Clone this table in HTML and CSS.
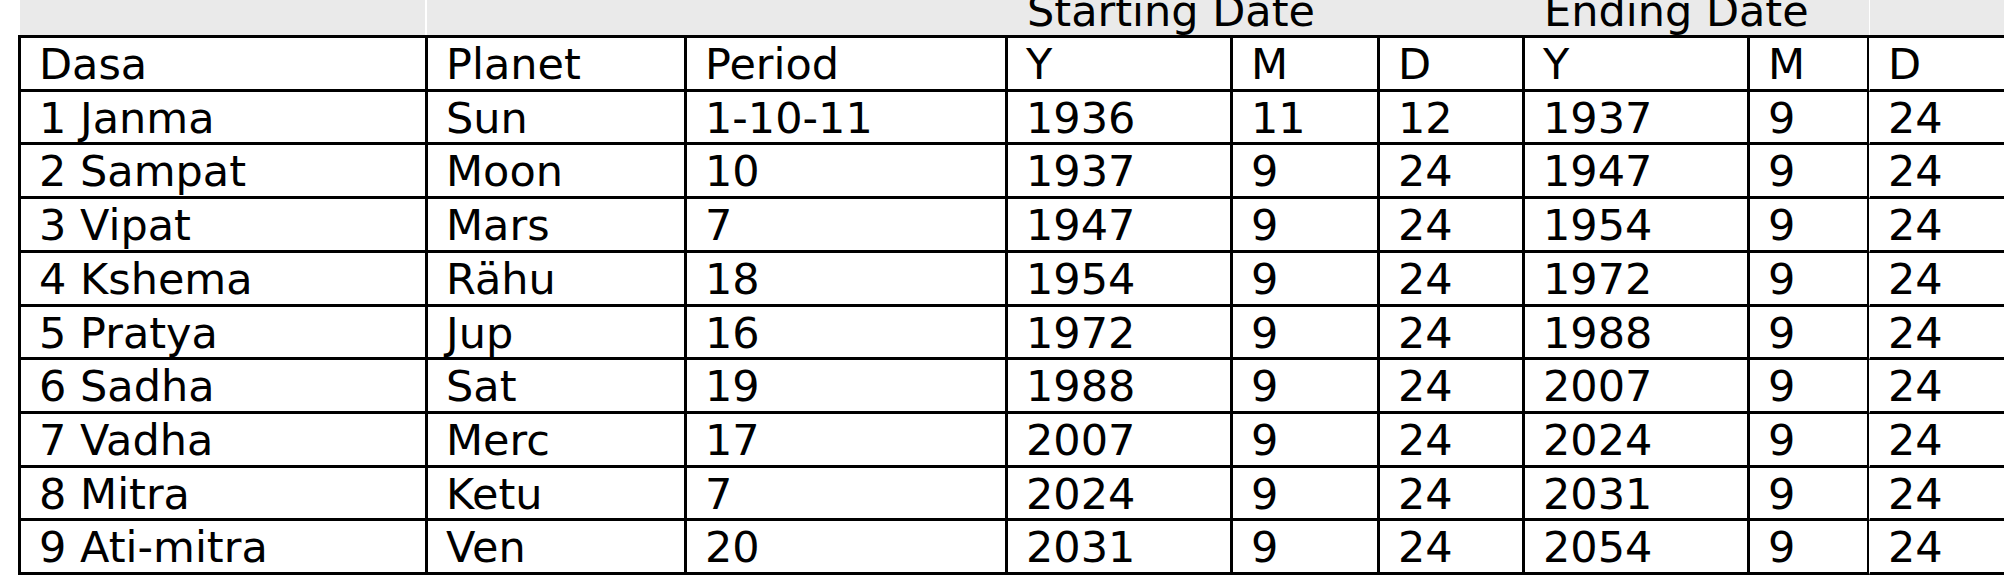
FILE: index.html
```html
<!DOCTYPE html>
<html lang="en">
<head>
<meta charset="utf-8">
<title>Dasa table</title>
<link rel="stylesheet" href="styles.css">
</head>
<body>
<div class="page">
  <div class="band">
    <div class="seg seg-a"></div>
    <div class="seg seg-b">
      <div class="band-cell"></div>
      <div class="band-cell">Starting Date</div>
      <div class="band-cell">Ending Date</div>
    </div>
    <div class="seg seg-c"></div>
  </div>
  <table class="dasa">
    <colgroup>
      <col class="c1"><col class="c2"><col class="c3"><col class="c4"><col class="c5"><col class="c6"><col class="c7"><col class="c8"><col class="c9">
    </colgroup>
    <tbody>
      <tr><td>Dasa</td><td>Planet</td><td>Period</td><td>Y</td><td>M</td><td>D</td><td>Y</td><td>M</td><td>D</td></tr>
      <tr><td>1 Janma</td><td>Sun</td><td>1-10-11</td><td>1936</td><td>11</td><td>12</td><td>1937</td><td>9</td><td>24</td></tr>
      <tr><td>2 Sampat</td><td>Moon</td><td>10</td><td>1937</td><td>9</td><td>24</td><td>1947</td><td>9</td><td>24</td></tr>
      <tr><td>3 Vipat</td><td>Mars</td><td>7</td><td>1947</td><td>9</td><td>24</td><td>1954</td><td>9</td><td>24</td></tr>
      <tr><td>4 Kshema</td><td>Rähu</td><td>18</td><td>1954</td><td>9</td><td>24</td><td>1972</td><td>9</td><td>24</td></tr>
      <tr><td>5 Pratya</td><td>Jup</td><td>16</td><td>1972</td><td>9</td><td>24</td><td>1988</td><td>9</td><td>24</td></tr>
      <tr><td>6 Sadha</td><td>Sat</td><td>19</td><td>1988</td><td>9</td><td>24</td><td>2007</td><td>9</td><td>24</td></tr>
      <tr><td>7 Vadha</td><td>Merc</td><td>17</td><td>2007</td><td>9</td><td>24</td><td>2024</td><td>9</td><td>24</td></tr>
      <tr><td>8 Mitra</td><td>Ketu</td><td>7</td><td>2024</td><td>9</td><td>24</td><td>2031</td><td>9</td><td>24</td></tr>
      <tr><td>9 Ati-mitra</td><td>Ven</td><td>20</td><td>2031</td><td>9</td><td>24</td><td>2054</td><td>9</td><td>24</td></tr>
    </tbody>
  </table>
</div>
</body>
</html>
```
FILE: styles.css
```css
html, body {
  margin: 0;
  padding: 0;
  background: #ffffff;
  overflow: hidden;
}

.page {
  width: 2100px;
  padding-left: 18px;
  font-family: "DejaVu Sans", Verdana, sans-serif;
  font-size: 43px;
  color: #000000;
}

.band {
  display: flex;
  height: 35px;
  overflow: hidden;
  margin-left: 2px;
}

.seg {
  background: #eaeaea;
  height: 35px;
}

.seg-a {
  width: 405px;
}

.seg-b {
  width: 1442px;
  margin-left: 2px;
  display: grid;
  grid-template-columns: 581px 517px 344px;
}

.seg-c {
  width: 200px;
  margin-left: 1px;
}

.band-cell {
  padding-left: 19px;
  line-height: 43px;
  margin-top: -10px;
  white-space: nowrap;
}

.dasa {
  border-collapse: separate;
  border-spacing: 0;
  table-layout: fixed;
  width: 2052px;
  border-top: 3px solid #000;
  border-left: 3px solid #000;
}

.c1 { width: 407px; }
.c2 { width: 259px; }
.c3 { width: 321px; }
.c4 { width: 225px; }
.c5 { width: 147px; }
.c6 { width: 145px; }
.c7 { width: 225px; }
.c8 { width: 119px; }
.c9 { width: 201px; }

.dasa td {
  box-sizing: content-box;
  height: 48.7px;
  line-height: 48.7px;
  padding: 2px 0 0 18px;
  border-right: 3px solid #000;
  border-bottom: 3px solid #000;
  white-space: nowrap;
  vertical-align: top;
}

.dasa td:nth-child(8) {
  border-right-width: 2px;
}

.dasa td:nth-child(9) {
  border-left: 1px solid #ffffff;
  border-right: none;
}
```
